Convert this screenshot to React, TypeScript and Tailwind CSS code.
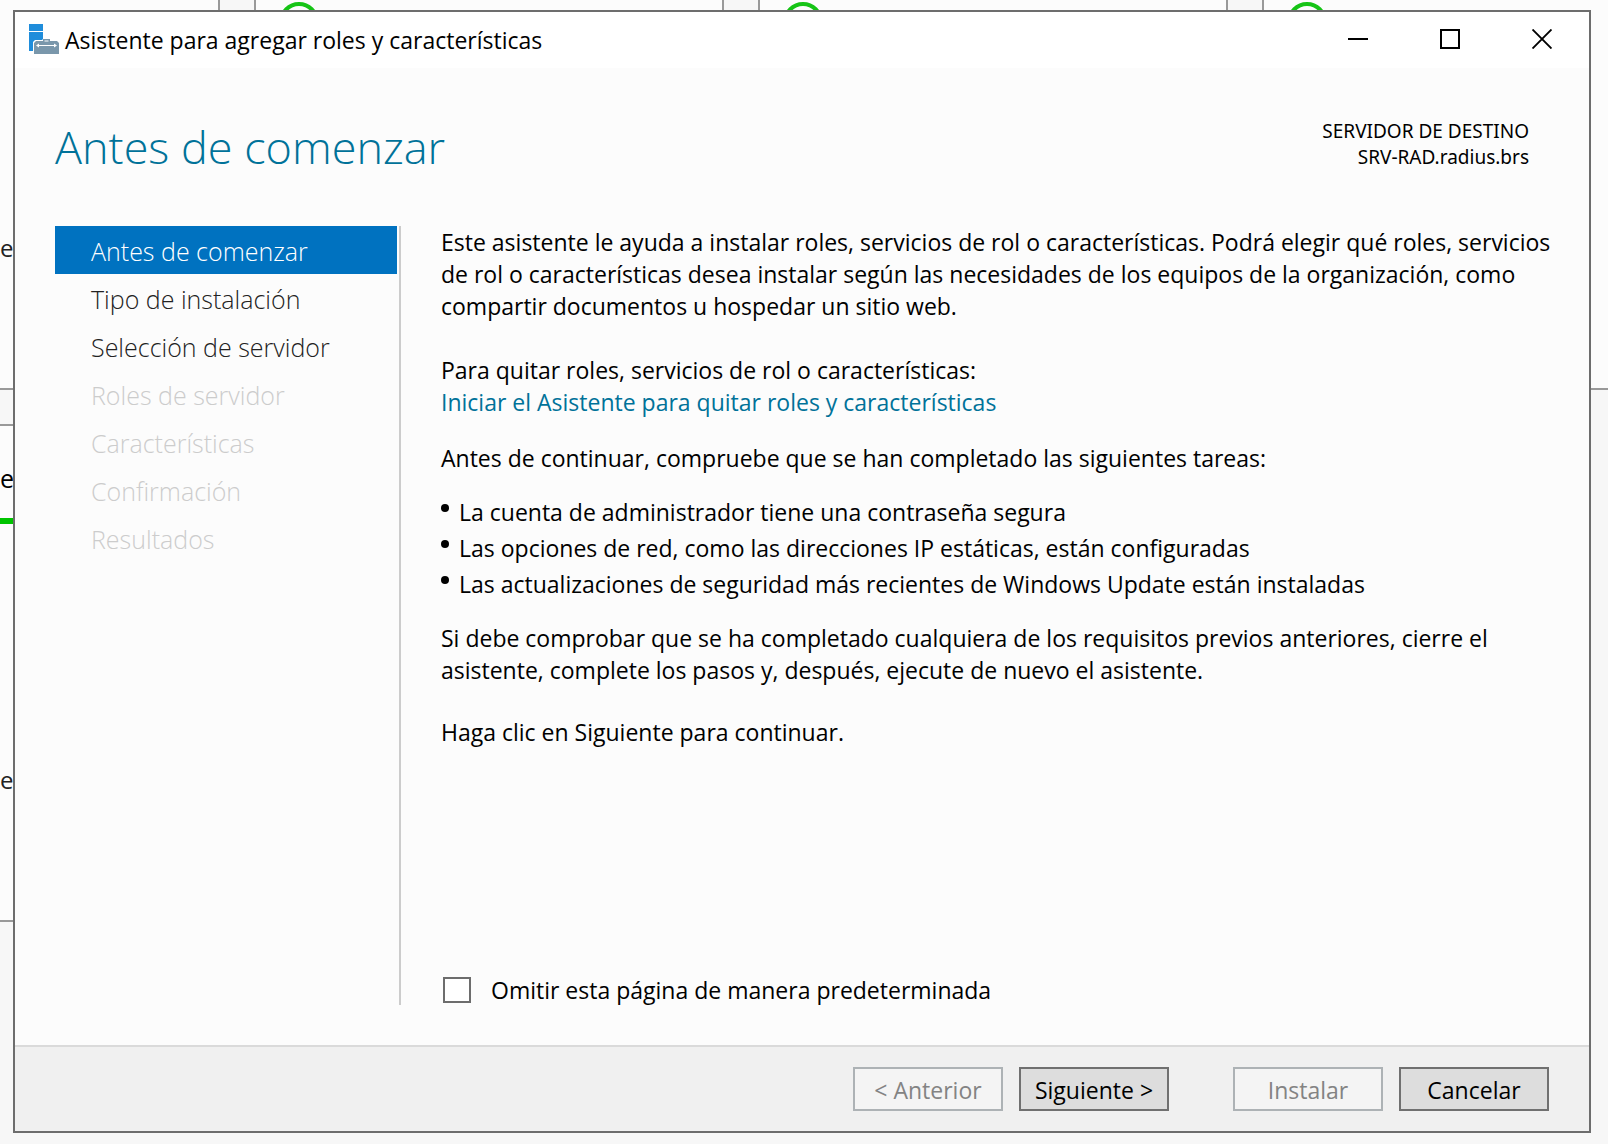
import { useState } from 'react';

type StepState = 'current' | 'ready' | 'locked';

const STEPS: { label: string; state: StepState }[] = [
  { label: 'Antes de comenzar',     state: 'current' },
  { label: 'Tipo de instalación',   state: 'ready' },
  { label: 'Selección de servidor', state: 'ready' },
  { label: 'Roles de servidor',     state: 'locked' },
  { label: 'Características',       state: 'locked' },
  { label: 'Confirmación',          state: 'locked' },
  { label: 'Resultados',            state: 'locked' },
];

const TASKS = [
  'La cuenta de administrador tiene una contraseña segura',
  'Las opciones de red, como las direcciones IP estáticas, están configuradas',
  'Las actualizaciones de seguridad más recientes de Windows Update están instaladas',
];

const STEP_STYLES: Record<StepState, string> = {
  current: 'bg-[#0072c0] text-white',
  ready: 'text-[#222222]',
  locked: 'text-[#cccccc]',
};

export default function App() {
  const [skip, setSkip] = useState(false);

  return (
    <div className="relative flex min-h-screen flex-col overflow-hidden bg-[#fcfcfc] font-['Open_Sans','Noto_Sans',sans-serif] text-[23px] leading-8 text-black">
      <Dashboard />
      <section className="relative mt-[10px] mr-[17px] mb-[11px] ml-[13px] flex flex-1 flex-col border-2 border-[#6d6d6d] bg-[#fcfcfc]">
        <TitleBar />

        <header className="flex items-start justify-between pt-11 pr-[60px] pb-11 pl-10">
          <h1 className="text-[45px] leading-[70px] font-light text-[#007299]">Antes de comenzar</h1>
          <div className="pt-1.5 text-right font-['Noto_Sans','Open_Sans',sans-serif] text-[19px] leading-[26px]">
            <p>SERVIDOR DE DESTINO</p>
            <p>SRV-RAD.radius.brs</p>
          </div>
        </header>

        <div className="flex flex-1 pr-9 pb-10 pl-10">
          <nav className="w-[346px] shrink-0 border-r-2 border-[#cccccc] pr-0.5">
            <ul>
              {STEPS.map(step => (
                <li key={step.label}>
                  <button
                    disabled={step.state === 'locked'}
                    className={`block h-12 w-full pt-0.5 pl-9 text-left text-[25px] font-light ${STEP_STYLES[step.state]}`}
                  >
                    {step.label}
                  </button>
                </li>
              ))}
            </ul>
          </nav>

          <main className="flex flex-1 flex-col pl-10">
            <p>
              Este asistente le ayuda a instalar roles, servicios de rol o características. Podrá elegir qué roles, servicios
              de rol o características desea instalar según las necesidades de los equipos de la organización, como
              compartir documentos u hospedar un sitio web.
            </p>
            <p className="mt-8">Para quitar roles, servicios de rol o características:</p>
            <p><a href="#quitar" className="text-[#007299]">Iniciar el Asistente para quitar roles y características</a></p>
            <p className="mt-6">Antes de continuar, compruebe que se han completado las siguientes tareas:</p>
            <ul className="mt-5 flex flex-col">
              {TASKS.map(task => (
                <li key={task} className="flex items-start gap-2.5 leading-9">
                  <span className="mt-2.5 size-2 shrink-0 rounded-full bg-black" />
                  {task}
                </li>
              ))}
            </ul>
            <p className="mt-5">
              Si debe comprobar que se ha completado cualquiera de los requisitos previos anteriores, cierre el
              asistente, complete los pasos y, después, ejecute de nuevo el asistente.
            </p>
            <p className="mt-[30px]">Haga clic en Siguiente para continuar.</p>

            <label className="mt-auto flex items-center gap-5 leading-[30px]">
              <input
                type="checkbox"
                checked={skip}
                onChange={e => setSkip(e.target.checked)}
                className="ml-0.5 h-[26px] w-7 appearance-none border-2 border-[#6d6d6d] bg-white checked:bg-[#0072c0]"
              />
              Omitir esta página de manera predeterminada
            </label>
          </main>
        </div>

        <footer className="flex justify-end gap-16 border-t-2 border-[#dadada] bg-[#f0f0f0] px-10 py-5">
          <div className="flex gap-4">
            <WizardButton label="< Anterior" disabled />
            <WizardButton label="Siguiente >" />
          </div>
          <div className="flex gap-4">
            <WizardButton label="Instalar" disabled />
            <WizardButton label="Cancelar" />
          </div>
        </footer>
      </section>
    </div>
  );
}

// Barra de título con los controles de la ventana
function TitleBar() {
  return (
    <div className="flex h-14 items-center justify-between bg-white pr-px pb-0.5 pl-3.5">
      <div className="flex items-center gap-1.5">
        <WizardIcon />
        <span className="pt-0.5">Asistente para agregar roles y características</span>
      </div>
      <div className="flex">
        <button aria-label="Minimizar" className="flex h-[54px] w-[92px] items-center justify-center">
          <svg width="20" height="20" shapeRendering="crispEdges"><path d="M0 10h20" stroke="#000" strokeWidth="2" /></svg>
        </button>
        <button aria-label="Maximizar" className="flex h-[54px] w-[92px] items-center justify-center">
          <svg width="20" height="20" shapeRendering="crispEdges"><path d="M1 1h18v18H1z" fill="none" stroke="#000" strokeWidth="2" /></svg>
        </button>
        <button aria-label="Cerrar" className="flex h-[54px] w-[92px] items-center justify-center">
          <svg width="20" height="20"><path d="M0.5 0.5l19 19M19.5 0.5l-19 19" stroke="#000" strokeWidth="1.9" /></svg>
        </button>
      </div>
    </div>
  );
}

function WizardIcon() {
  return (
    <svg width="30" height="30" viewBox="0 0 30 30">
      <path d="M0 0h14v7H0zM0 8h14v7l-1 1H6l-2 2v9H0z" fill="#1f8ddb" />
      <path d="M14 17v-2h7v2h7l2 2v11H5V19l2-2z" fill="#7a97ab" />
      <path d="M15.500 16.500h4v1h-4z" fill="#ffffff" />
      <path d="M8 21.500h19" stroke="#ffffff" strokeWidth="1" />
      <path d="M7 21.500l3-2v4zM28 21.500l-3-2v4z" fill="#ffffff" />
    </svg>
  );
}

function WizardButton({ label, disabled }: { label: string; disabled?: boolean }) {
  return (
    <button
      disabled={disabled}
      className={`h-11 w-[150px] border-2 pt-0.5 whitespace-nowrap ${
        disabled ? 'border-[#adb2b5] bg-[#f4f4f4] text-[#838383]' : 'border-[#707070] bg-[#dddddd] text-black'
      }`}
    >
      {label}
    </button>
  );
}

// Panel del servidor que asoma detrás de la ventana
function Dashboard() {
  return (
    <svg aria-hidden="true" className="absolute inset-0 size-full">
      {[218, 722, 1226].map(x => (
        <g key={x}>
          <path d={`M${x} 0h38v300h-38z`} fill="#f7f7f7" />
          <path d={`M${x + 1} 0v300M${x + 37} 0v300`} stroke="#999999" strokeWidth="2" />
          <circle cx={x + 81} cy="22" r="18" fill="none" stroke="#16c416" strokeWidth="4" />
        </g>
      ))}
      <path d="M0 388h800v38H0zM0 920h800v224H0zM800 388h808v756H800z" fill="#f7f7f7" />
      <path d="M0 389h1608M0 425h800M0 921h800" stroke="#999999" strokeWidth="2" />
      <path d="M0 518h14v6H0z" fill="#00c400" />
      <text x="0" y="257" fontSize="24" fill="#222222">e</text>
      <text x="0" y="488" fontSize="25" fill="#000000">e</text>
      <text x="0" y="789" fontSize="24" fill="#222222">e</text>
    </svg>
  );
}
